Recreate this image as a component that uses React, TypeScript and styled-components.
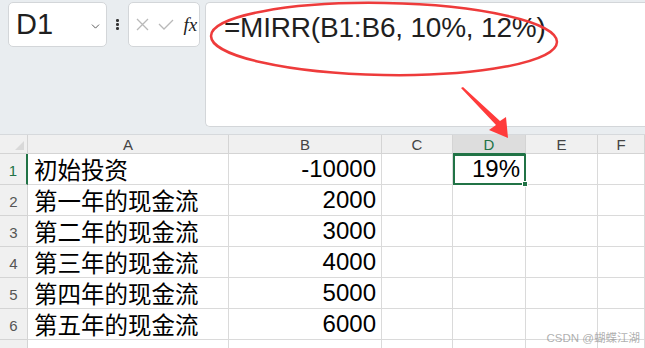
import React from "react";
import styled, { createGlobalStyle } from "styled-components";
import { ChevronDown } from "lucide-react";

const GlobalStyle = createGlobalStyle`
  html, body {
    margin: 0;
    padding: 0;
    background: #ffffff;
    overflow: hidden;
  }
  * { box-sizing: border-box; }
`;

const Page = styled.div`
  position: relative;
  width: 645px;
  height: 348px;
  overflow: hidden;
  font-family: "Liberation Sans", "Noto Sans CJK SC", sans-serif;
  background: #ffffff;
`;

const Toolbar = styled.div`
  display: flex;
  align-items: flex-start;
  height: 135px;
  padding: 2px 0 0 8px;
  background: #e9edf0;
  border-bottom: 1px solid #d6d9dc;
`;

const Box = styled.div`
  background: #ffffff;
  border: 1px solid #d3d6d9;
  border-radius: 5px;
`;

const NameBox = styled(Box)`
  width: 101px;
  height: 45px;
  display: flex;
  align-items: center;
  justify-content: space-between;
  padding: 0 4px 0 7px;
  font-size: 29px;
  color: #1f1f1f;
  line-height: 29px;
`;

const Dots = styled.div`
  width: 22px;
  height: 45px;
  display: flex;
  flex-direction: column;
  align-items: center;
  justify-content: center;
  gap: 1.5px;
  & > span {
    width: 2.5px;
    height: 2.5px;
    border-radius: 50%;
    background: #333;
  }
`;

const FxBox = styled(Box)`
  width: 73px;
  height: 45px;
  display: flex;
  align-items: center;
  padding-left: 7px;
  gap: 9px;
`;

const FxLabel = styled.span`
  font-family: "Liberation Serif", serif;
  font-style: italic;
  font-size: 19px;
  color: #222;
`;

const FormulaBox = styled(Box)`
  margin-left: 5px;
  width: 450px;
  height: 125px;
  padding: 11px 0 0 18px;
  border-top-right-radius: 0;
  border-bottom-right-radius: 0;
  border-right: none;
  font-size: 28px;
  line-height: 28px;
  letter-spacing: -0.2px;
  color: #1f1f1f;
  white-space: nowrap;
`;

const Sheet = styled.div`
  display: grid;
  grid-template-columns: 28px 201px 153px 71px 73px 72px 1fr;
  grid-template-rows: 19px repeat(6, 31px) 20px;
`;

const HeadCell = styled.div<{ $active?: boolean }>`
  display: flex;
  align-items: center;
  justify-content: center;
  background: ${({ $active }) => ($active ? "#dddddd" : "#f0f0f0")};
  color: ${({ $active }) => ($active ? "#217346" : "#444")};
  font-size: 15px;
  border-right: 1px solid #d4d4d4;
  border-bottom: 1px solid ${({ $active }) => ($active ? "#217346" : "#d4d4d4")};
`;

const Corner = styled(HeadCell)`
  position: relative;
  &::after {
    content: "";
    position: absolute;
    right: 3px;
    bottom: 3px;
    border-left: 9px solid transparent;
    border-bottom: 9px solid #d9d9d9;
  }
`;

const RowHead = styled.div<{ $active?: boolean }>`
  display: flex;
  align-items: center;
  justify-content: center;
  background: #f0f0f0;
  color: ${({ $active }) => ($active ? "#217346" : "#555")};
  font-size: 15px;
  padding-top: 2px;
  border-bottom: 1px solid #d4d4d4;
  border-right: ${({ $active }) => ($active ? "2px solid #217346" : "1px solid #d4d4d4")};
`;

const Cell = styled.div<{ $num?: boolean; $selected?: boolean }>`
  position: relative;
  display: flex;
  align-items: center;
  justify-content: ${({ $num }) => ($num ? "flex-end" : "flex-start")};
  padding: ${({ $num }) => ($num ? "0 5px 0 0" : "0 0 0 6px")};
  font-size: ${({ $num }) => ($num ? "24px" : "23.5px")};
  color: #000;
  white-space: nowrap;
  border-right: 1px solid #dadada;
  border-bottom: 1px solid #dadada;
  ${({ $selected }) =>
    $selected &&
    `
    outline: 2px solid #217346;
    outline-offset: -2px;
    padding-right: 5px;
    z-index: 1;
  `}
`;

const FillHandle = styled.span`
  position: absolute;
  right: -3px;
  bottom: -3px;
  width: 6px;
  height: 6px;
  background: #217346;
  border: 1px solid #fff;
`;

const Overlay = styled.svg`
  position: absolute;
  left: 0;
  top: 0;
  pointer-events: none;
`;

const Watermark = styled.div`
  position: absolute;
  right: 5px;
  bottom: 3px;
  font-size: 11.5px;
  color: rgba(140, 140, 140, 0.7);
  font-family: "Liberation Sans", "Noto Sans CJK SC", sans-serif;
`;

const columns = ["A", "B", "C", "D", "E", "F"];

const rows: [string, string][] = [
  ["初始投资", "-10000"],
  ["第一年的现金流", "2000"],
  ["第二年的现金流", "3000"],
  ["第三年的现金流", "4000"],
  ["第四年的现金流", "5000"],
  ["第五年的现金流", "6000"],
];

const XIcon = () => (
  <svg width="13" height="13" viewBox="0 0 13 13">
    <path d="M1 1L12 12M12 1L1 12" stroke="#b9b9b9" strokeWidth="1.3" fill="none" />
  </svg>
);

const CheckIcon = () => (
  <svg width="16" height="11" viewBox="0 0 16 11">
    <path d="M1 5L6 10L15 1" stroke="#b9b9b9" strokeWidth="1.3" fill="none" />
  </svg>
);

export default function App() {
  return (
    <Page>
      <GlobalStyle />
      <Toolbar>
        <NameBox>
          <span>D1</span>
          <ChevronDown size={13} color="#444" strokeWidth={1.6} style={{ marginTop: 3 }} />
        </NameBox>
        <Dots>
          <span />
          <span />
          <span />
        </Dots>
        <FxBox>
          <XIcon />
          <CheckIcon />
          <FxLabel>fx</FxLabel>
        </FxBox>
        <FormulaBox>=MIRR(B1:B6, 10%, 12%)</FormulaBox>
      </Toolbar>

      <Sheet>
        <Corner />
        {columns.map((c) => (
          <HeadCell key={c} $active={c === "D"}>
            {c}
          </HeadCell>
        ))}
        {rows.map(([label, value], i) => (
          <React.Fragment key={label}>
            <RowHead $active={i === 0}>{i + 1}</RowHead>
            <Cell>{label}</Cell>
            <Cell $num>{value}</Cell>
            <Cell />
            {i === 0 ? (
              <Cell $num $selected>
                19%
                <FillHandle />
              </Cell>
            ) : (
              <Cell />
            )}
            <Cell />
            <Cell />
          </React.Fragment>
        ))}
        <RowHead />
        <Cell />
        <Cell />
        <Cell />
        <Cell />
        <Cell />
        <Cell />
      </Sheet>

      <Overlay width="645" height="348" viewBox="0 0 645 348">
        <ellipse
          cx="384"
          cy="39"
          rx="173"
          ry="36"
          fill="none"
          stroke="#ee3b3b"
          strokeWidth="2.5"
          transform="rotate(1 384 39)"
        />
        <path d="M461 88 L463 87 L500 121 L506 117 L508 138 L489 130 L496 125 Z" fill="#ff3b3b" />
      </Overlay>

      <Watermark>CSDN @蝴蝶江湖</Watermark>
    </Page>
  );
}
